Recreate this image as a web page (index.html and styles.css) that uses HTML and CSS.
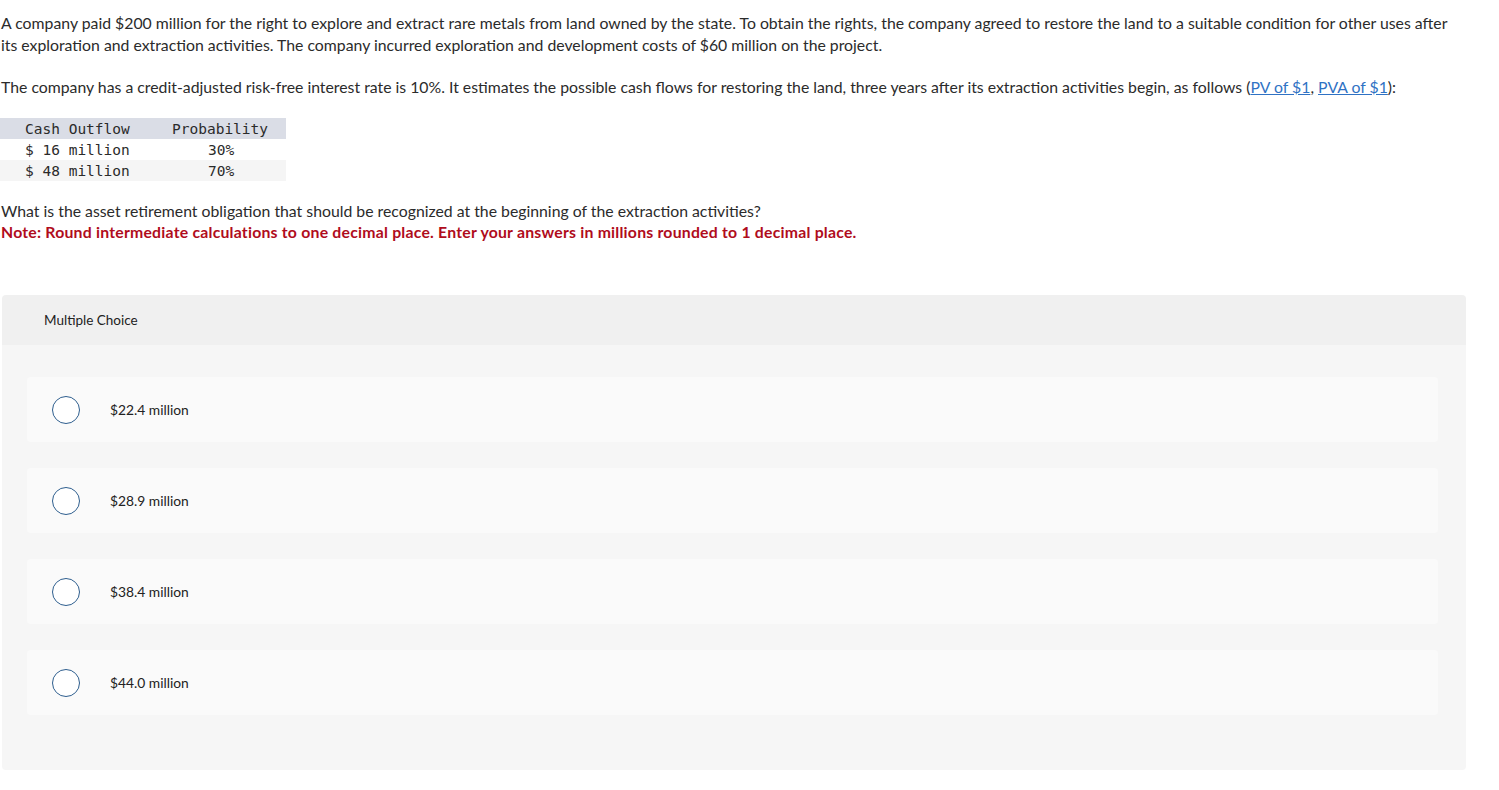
FILE: index.html
```html
<!DOCTYPE html>
<html>
<head>
<meta charset="utf-8">
<link rel="stylesheet" href="styles.css">
</head>
<body>
<div class="page">
  <p class="para">A company paid $200 million for the right to explore and extract rare metals from land owned by the state. To obtain the rights, the company agreed to restore the land to a suitable condition for other uses after its exploration and extraction activities. The company incurred exploration and development costs of $60 million on the project.</p>
  <p class="para">The company has a credit-adjusted risk-free interest rate is 10%. It estimates the possible cash flows for restoring the land, three years after its extraction activities begin, as follows (<a href="#" class="lnk">PV of $1</a>, <a href="#" class="lnk">PVA of $1</a>):</p>
  <table class="cf">
    <tr class="hd"><td class="c1">Cash Outflow</td><td class="c2">Probability</td></tr>
    <tr class="r1"><td class="c1">$ 16 million</td><td class="c2 ctr">30%</td></tr>
    <tr class="r2"><td class="c1">$ 48 million</td><td class="c2 ctr">70%</td></tr>
  </table>
  <p class="q">What is the asset retirement obligation that should be recognized at the beginning of the extraction activities?<br><span class="note">Note: Round intermediate calculations to one decimal place. Enter your answers in millions rounded to 1 decimal place.</span></p>
  <div class="mc">
    <div class="mc-head">Multiple Choice</div>
    <div class="mc-body">
      <div class="opt"><span class="radio"></span><span class="lbl">$22.4 million</span></div>
      <div class="opt"><span class="radio"></span><span class="lbl">$28.9 million</span></div>
      <div class="opt"><span class="radio"></span><span class="lbl">$38.4 million</span></div>
      <div class="opt"><span class="radio"></span><span class="lbl">$44.0 million</span></div>
    </div>
  </div>
</div>
</body>
</html>
```

FILE: styles.css
```css
html, body { margin: 0; padding: 0; background: #fff; }
body { font-family: "Lato", "Liberation Sans", sans-serif; color: #2b2b2b; }
.page { padding: 12px 0 0 1px; }
.para { margin: 0 0 20px 0; font-size: 15.8px; line-height: 22px; max-width: 1462px; }
.lnk { color: #2f72c4; text-decoration: underline; }
.cf { border-collapse: collapse; font-family: "DejaVu Sans Mono", monospace; font-size: 14.5px; margin: 10px 0 0 -1px; }
.cf td { height: 20px; padding: 1px 0 0 0; line-height: 20px; }
.cf .c1 { width: 122px; padding-left: 25px; }
.cf .c2 { width: 139px; }
.cf .ctr { padding-left: 61px; width: 78px; }
.cf .hd td { background: #dadde6; }
.cf .hd .c2 { padding-left: 25px; width: 114px; }
.cf .r2 td { background: #f5f5f5; }
.q { margin: 19px 0 0 0; font-size: 15.8px; line-height: 21px; }
.note { color: #b00c1c; font-weight: 700; letter-spacing: 0.22px; }
.mc { margin: 53px 0 0 1px; width: 1464px; border-radius: 4px; overflow: hidden; }
.mc-head { background: #f0f0f0; height: 50px; display: flex; align-items: center; padding-left: 42px; font-size: 13.5px; color: #222; }
.mc-body { background: #f6f6f6; padding: 32px 28px 55px 25px; display: flex; flex-direction: column; gap: 26px; }
.opt { background: #fafafa; height: 65px; border-radius: 4px; display: flex; align-items: center; }
.radio { width: 26px; height: 26px; border: 1.5px solid #2e5e8e; border-radius: 50%; background: #fff; margin-left: 25px; }
.lbl { margin-left: 30px; font-size: 13.8px; color: #222; }
```
